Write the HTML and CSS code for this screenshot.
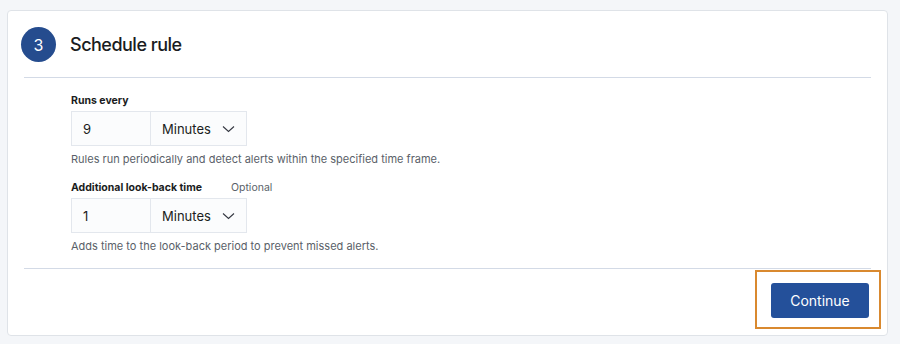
FILE: index.html
```html
<!DOCTYPE html>
<html lang="en">
<head>
    <meta charset="UTF-8">
    <title>Schedule rule</title>
    <link rel="stylesheet" href="styles.css">
</head>
<body>
    <div class="card">
        <div class="step-header">
            <span class="step-num">3</span>
            <h2>Schedule rule</h2>
        </div>

        <div class="step-body">
            <div class="field">
                <div class="field-label"><strong>Runs every</strong></div>
                <div class="input-group">
                    <div class="num-input">9</div>
                    <div class="unit-select">
                        <span>Minutes</span>
                        <svg width="13" height="8" viewBox="0 0 13 8"><path d="M1 1.5l5.5 5 5.5-5" fill="none" stroke="#343741" stroke-width="1.1"/></svg>
                    </div>
                </div>
                <p class="help">Rules run periodically and detect alerts within the specified time frame.</p>
            </div>

            <div class="field">
                <div class="field-label"><strong>Additional look-back time</strong> <span class="optional">Optional</span></div>
                <div class="input-group">
                    <div class="num-input">1</div>
                    <div class="unit-select">
                        <span>Minutes</span>
                        <svg width="13" height="8" viewBox="0 0 13 8"><path d="M1 1.5l5.5 5 5.5-5" fill="none" stroke="#343741" stroke-width="1.1"/></svg>
                    </div>
                </div>
                <p class="help">Adds time to the look-back period to prevent missed alerts.</p>
            </div>
        </div>

        <div class="step-footer">
            <div class="highlight">
                <button class="continue-btn">Continue</button>
            </div>
        </div>
    </div>
</body>
</html>
```

FILE: styles.css
```css
body {
    margin: 0;
    background-color: #f4f6f9;
    font-family: Inter, "Liberation Sans", Arial, sans-serif;
    color: #1a1c21;
}

.card {
    margin: 10px 12px 0 7px;
    height: 326px;
    box-sizing: border-box;
    background: #fff;
    border: 1px solid #dfe3e8;
    border-radius: 4px;
    padding: 0 16px;
}

.step-header {
    display: flex;
    align-items: center;
    height: 66px;
    border-bottom: 1px solid #d3dae6;
}

.step-num {
    width: 35px;
    height: 35px;
    margin-left: -3px;
    border-radius: 50%;
    background: #254c8e;
    color: #fff;
    font-size: 16px;
    display: flex;
    align-items: center;
    justify-content: center;
    margin-top: 1px;
}

.step-header h2 {
    margin: 0 0 0 14px;
    font-size: 18px;
    font-weight: 500;
    letter-spacing: -0.5px;
}

.step-body {
    padding: 16px 0 0 47px;
    height: 191px;
    box-sizing: border-box;
    border-bottom: 1px solid #d3dae6;
}

.field {
    margin-bottom: 15px;
}

.field-label {
    font-size: 10.5px;
    height: 14px;
    margin-bottom: 3px;
}

.optional {
    color: #5a5f69;
    margin-left: 26px;
}

.input-group {
    display: flex;
    width: 176px;
    height: 35px;
    box-sizing: border-box;
    border: 1px solid #e3e7ed;
    background: #fbfcfd;
    font-size: 13px;
}

.num-input {
    width: 79px;
    padding-left: 11px;
    box-sizing: border-box;
    border-right: 1px solid #e3e7ed;
    display: flex;
    align-items: center;
}

.unit-select {
    flex: 1;
    display: flex;
    align-items: center;
    padding-left: 11px;
    gap: 11px;
}

.help {
    margin: 6px 0 0;
    font-size: 11px;
    color: #5a5f69;
}

.step-footer {
    display: flex;
    justify-content: flex-end;
    margin-right: -10px;
}

.highlight {
    margin-top: 1px;
    padding: 11px 10px 9px 14px;
    border: 2px solid #d9892f;
}

.continue-btn {
    display: block;
    width: 98px;
    height: 35px;
    background: #24509a;
    color: #fff;
    border: none;
    border-radius: 3px;
    font-family: inherit;
    font-size: 14px;
}
```
